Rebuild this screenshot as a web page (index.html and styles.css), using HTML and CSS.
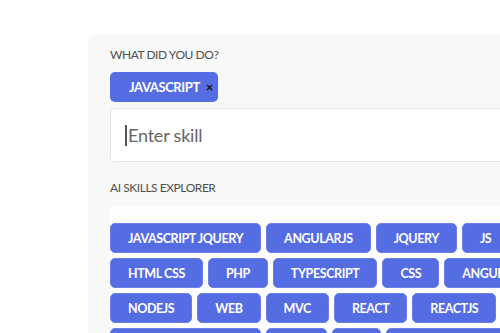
FILE: index.html
```html
<!DOCTYPE html>
<html>
<head>
<meta charset="utf-8">
<link rel="stylesheet" href="styles.css">
</head>
<body>
<div class="card">
  <div class="label">WHAT DID YOU DO?</div>
  <div class="selected">
    <span class="tag"><span class="tag-text">JAVASCRIPT</span><span class="tag-x">×</span></span>
  </div>
  <div class="input"><span class="caret"></span><span class="placeholder">Enter skill</span></div>
  <div class="label label-ai">AI SKILLS EXPLORER</div>
  <div class="explorer">
    <div class="row">
      <span class="skill">JAVASCRIPT JQUERY</span>
      <span class="skill">ANGULARJS</span>
      <span class="skill">JQUERY</span>
      <span class="skill">JS</span>
      <span class="skill">HTML</span>
    </div>
    <div class="row">
      <span class="skill">HTML CSS</span>
      <span class="skill">PHP</span>
      <span class="skill">TYPESCRIPT</span>
      <span class="skill">CSS</span>
      <span class="skill">ANGULAR</span>
    </div>
    <div class="row">
      <span class="skill">NODEJS</span>
      <span class="skill">WEB</span>
      <span class="skill">MVC</span>
      <span class="skill">REACT</span>
      <span class="skill">REACTJS</span>
      <span class="skill">HTML5</span>
    </div>
    <div class="row">
      <span class="skill">JQUERY JAVASCRIPT</span>
      <span class="skill">XML</span>
      <span class="skill">UI</span>
      <span class="skill">JAVASCRIPT ANGULARJS</span>
    </div>
  </div>
</div>
</body>
</html>
```
FILE: styles.css
```css
html, body {
  margin: 0;
  padding: 0;
  background: #ffffff;
  overflow: hidden;
  height: 333px;
}
body {
  font-family: "Lato", "Noto Sans", sans-serif;
}
.card {
  margin: 35px 0 0 88px;
  width: 520px;
  background: #f8f8f8;
  border-radius: 8px;
  padding: 12px 0 0 22px;
  height: 400px;
}
.label {
  font-size: 12px;
  line-height: 16px;
  color: #505050;
  letter-spacing: -0.45px;
}
.selected {
  margin-top: 9px;
  display: flex;
}
.tag {
  display: inline-flex;
  align-items: center;
  height: 30px;
  width: 108px;
  box-sizing: border-box;
  padding-left: 19px;
  background: #546de3;
  border-radius: 5px;
  color: #fff;
  font-weight: 700;
  font-size: 13px;
  letter-spacing: -0.4px;
}
.tag-text {
  flex: 1;
}
.tag-x {
  color: #111;
  font-size: 13px;
  font-weight: 700;
  margin-right: 5px;
}
.input {
  margin-top: 6px;
  width: 440px;
  height: 54px;
  box-sizing: border-box;
  background: #fff;
  border: 1px solid #e6e6e6;
  border-radius: 4px;
  display: flex;
  align-items: center;
  padding-left: 14px;
}
.caret {
  width: 2px;
  height: 21px;
  background: #555;
  margin-right: 1px;
}
.placeholder {
  font-size: 18px;
  color: #666;
  letter-spacing: -0.2px;
}
.label-ai {
  margin-top: 18px;
}
.explorer {
  margin-top: 10px;
  background: #fdfdfd;
  padding: 17px 0 0 0;
  width: 600px;
  display: flex;
  flex-direction: column;
  gap: 5px;
}
.row {
  display: flex;
  gap: 5px;
}
.skill {
  display: inline-flex;
  align-items: center;
  height: 30px;
  box-sizing: border-box;
  padding: 0 17px;
  background: #546de3;
  border: 1px solid #6a80e8;
  border-radius: 5px;
  color: #fff;
  font-weight: 700;
  font-size: 12.5px;
  letter-spacing: -0.4px;
  white-space: nowrap;
}
```
